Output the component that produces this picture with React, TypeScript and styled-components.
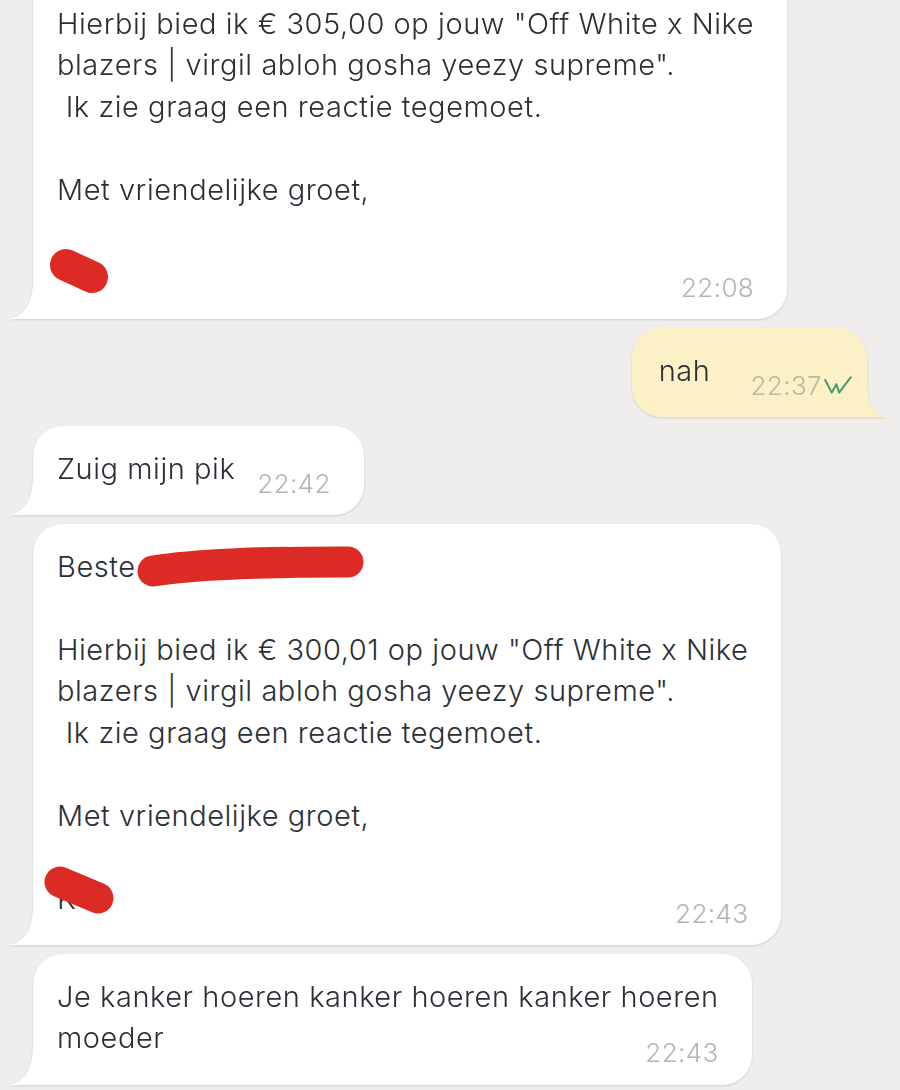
import React from "react";
import styled, { createGlobalStyle, css } from "styled-components";

const GlobalStyle = createGlobalStyle`
  html, body {
    margin: 0;
    padding: 0;
    background: #efeeec;
  }
  body {
    font-family: Inter, "Noto Sans", "Liberation Sans", sans-serif;
    -webkit-font-smoothing: antialiased;
  }
`;

type Side = "in" | "out";

const Chat = styled.div`
  display: flex;
  flex-direction: column;
  gap: 9px;
  width: 900px;
  height: 1090px;
  overflow: hidden;
`;

const Row = styled.div<{ $side: Side }>`
  display: flex;
  justify-content: ${(p) => (p.$side === "in" ? "flex-start" : "flex-end")};
  padding: 0 33px;
`;

const Bubble = styled.div<{ $side: Side; $cut?: boolean }>`
  position: relative;
  display: flex;
  flex-direction: column;
  filter: drop-shadow(0 1.2px 0.8px rgba(0, 0, 0, 0.13));
  background: ${(p) => (p.$side === "in" ? "#ffffff" : "#fcf1c6")};
  color: #2b3037;
  font-size: 29px;
  font-weight: 300;
  line-height: 41.5px;
  letter-spacing: 0.55px;
  padding: ${(p) => (p.$cut ? "2.7px" : "21.5px")}
    ${(p) => (p.$side === "in" ? "33px 14px 24px" : "15px 14px 27px")};
  border-radius: ${(p) =>
    p.$cut
      ? "0 0 30px 0"
      : p.$side === "in"
      ? "30px 30px 30px 0"
      : "30px 30px 0 30px"};

  &::after {
    content: "";
    position: absolute;
    bottom: 0;
    ${(p) =>
      p.$side === "in"
        ? css`
            left: -24px;
            width: 24px;
            height: 34px;
            background: radial-gradient(
              ellipse 100% 100% at 0 0,
              transparent 97%,
              #ffffff 100%
            );
          `
        : css`
            right: -20px;
            width: 20px;
            height: 30px;
            background: radial-gradient(
              ellipse 100% 100% at 100% 0,
              transparent 97%,
              #fcf1c6 100%
            );
          `}
  }
`;

const Line = styled.div`
  position: relative;
  white-space: pre;
  min-height: 41.5px;
`;

const LastRow = styled.div<{ $gap: number }>`
  display: flex;
  align-items: flex-end;
  gap: ${(p) => p.$gap}px;
`;

const LastText = styled(Line)`
  margin-bottom: 12px;
`;

const Meta = styled.div<{ $side: Side }>`
  margin-left: auto;
  display: flex;
  align-items: center;
  gap: 2px;
  font-size: 26px;
  font-weight: 300;
  line-height: 26px;
  padding-bottom: 4.5px;
  letter-spacing: 0.4px;
  color: ${(p) => (p.$side === "in" ? "#b4b4b4" : "#bcb7a4")};
`;

const Redaction = styled.svg<{ $left: number; $top: number }>`
  position: absolute;
  left: ${(p) => p.$left}px;
  top: ${(p) => p.$top}px;
  overflow: visible;
  pointer-events: none;
`;

const Ticks = styled.svg`
  width: 28px;
  height: 19px;
  margin-top: -2px;
`;

const RED = "#dc2b24";

const BlobSmall = ({ left, top }: { left: number; top: number }) => (
  <Redaction $left={left} $top={top} width={58} height={42} viewBox="0 0 58 42">
    <path d="M16 15 L42 27" stroke={RED} strokeWidth={32} strokeLinecap="round" fill="none" />
  </Redaction>
);

const BlobSig = ({ left, top }: { left: number; top: number }) => (
  <Redaction $left={left} $top={top} width={72} height={46} viewBox="0 0 72 46">
    <path d="M17 15 L55 31" stroke={RED} strokeWidth={31} strokeLinecap="round" fill="none" />
  </Redaction>
);

const BlobName = ({ left, top }: { left: number; top: number }) => (
  <Redaction $left={left} $top={top} width={230} height={40} viewBox="0 0 230 40">
    <path
      d="M17 23 C 60 16, 120 14, 212 14"
      stroke={RED}
      strokeWidth={31}
      strokeLinecap="round"
      fill="none"
    />
  </Redaction>
);

const DoubleTick = () => (
  <Ticks viewBox="0 0 28 19">
    <path
      d="M1.2 5 L7.8 17.6 L12.4 9.2 M12.4 9.2 L15.2 17.6 L26.8 2.2"
      stroke="#3f9f73"
      strokeWidth={2}
      strokeLinejoin="round"
      strokeLinecap="round"
      fill="none"
    />
  </Ticks>
);

type Msg = {
  side: Side;
  cut?: boolean;
  lines: React.ReactNode[];
  last: React.ReactNode;
  time: string;
  read?: boolean;
};

const messages: Msg[] = [
  {
    side: "in",
    cut: true,
    lines: [
      'Hierbij bied ik € 305,00 op jouw "Off White x Nike',
      'blazers | virgil abloh gosha yeezy supreme".',
      " Ik zie graag een reactie tegemoet.",
      "",
      "Met vriendelijke groet,",
      "",
    ],
    last: (
      <>
        {" "}
        <BlobSmall left={-7} top={-2} />
      </>
    ),
    time: "22:08",
  },
  {
    side: "out",
    lines: [],
    last: "nah",
    time: "22:37",
    read: true,
  },
  {
    side: "in",
    lines: [],
    last: "Zuig mijn pik",
    time: "22:42",
  },
  {
    side: "in",
    lines: [
      <>
        Beste
        <BlobName left={79} top={2.3} />
      </>,
      "",
      'Hierbij bied ik € 300,01 op jouw "Off White x Nike',
      'blazers | virgil abloh gosha yeezy supreme".',
      " Ik zie graag een reactie tegemoet.",
      "",
      "Met vriendelijke groet,",
      "",
    ],
    last: (
      <>
        K
        <BlobSig left={-14} top={-10.7} />
      </>
    ),
    time: "22:43",
  },
  {
    side: "in",
    lines: ["Je kanker hoeren kanker hoeren kanker hoeren"],
    last: "moeder",
    time: "22:43",
  },
];

export default function App() {
  return (
    <>
      <GlobalStyle />
      <Chat>
        {messages.map((m, i) => (
          <Row key={i} $side={m.side}>
            <Bubble $side={m.side} $cut={m.cut}>
              {m.lines.map((l, j) => (
                <Line key={j}>{l}</Line>
              ))}
              <LastRow $gap={m.side === "in" ? 22 : 40}>
                <LastText>{m.last}</LastText>
                <Meta $side={m.side}>
                  {m.time}
                  {m.read && <DoubleTick />}
                </Meta>
              </LastRow>
            </Bubble>
          </Row>
        ))}
      </Chat>
    </>
  );
}
